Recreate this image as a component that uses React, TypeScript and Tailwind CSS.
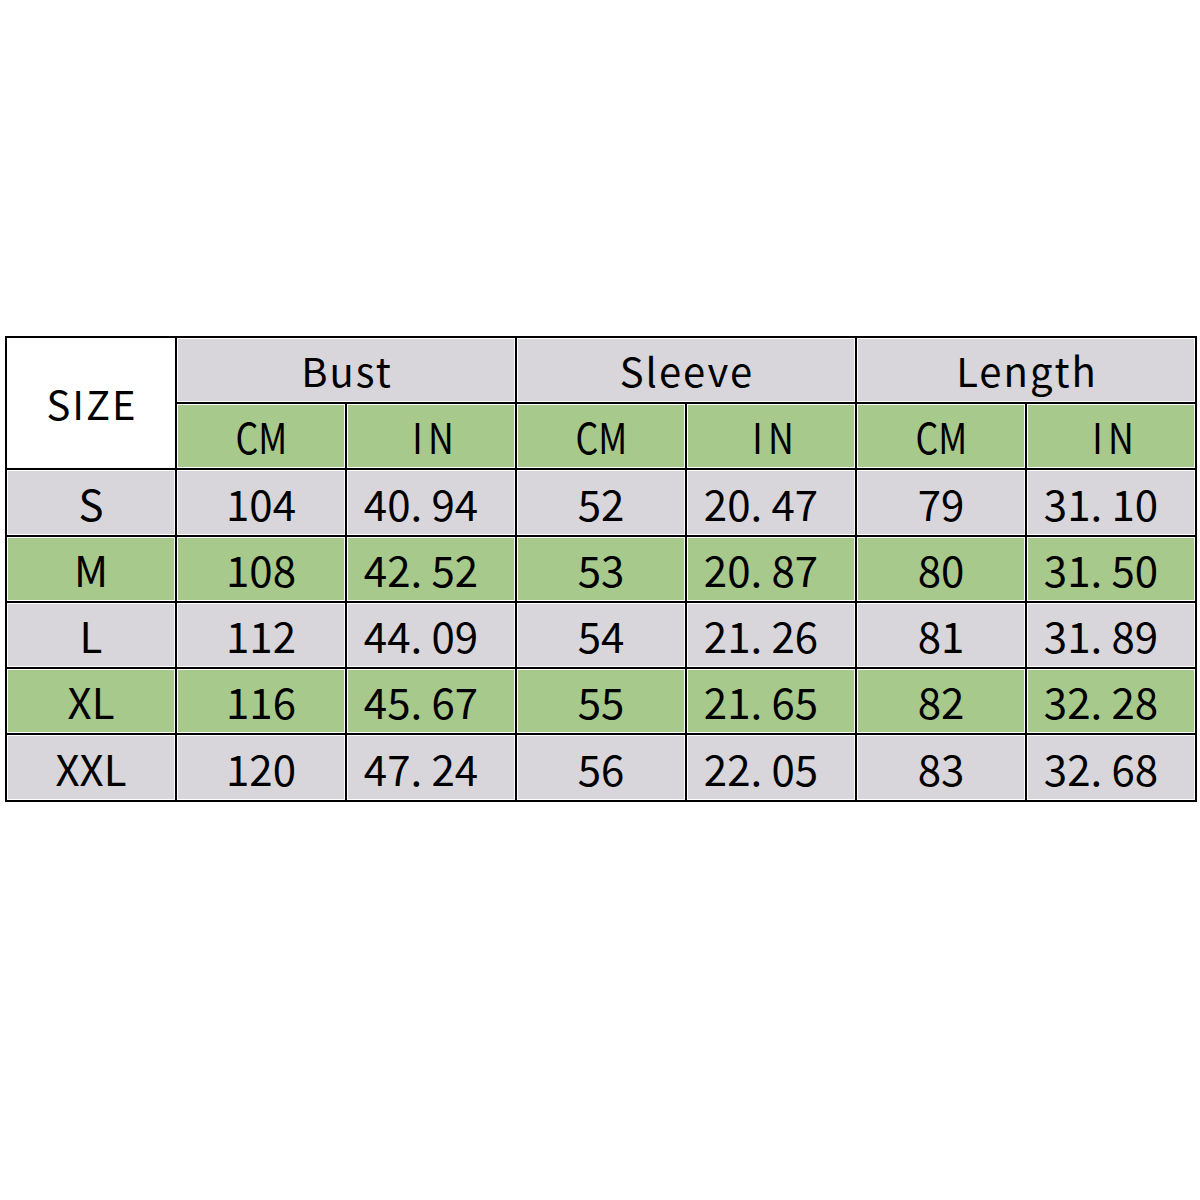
import React from "react";

const rows = [
  ["S", "104", "40. 94", "52", "20. 47", "79", "31. 10"],
  ["M", "108", "42. 52", "53", "20. 87", "80", "31. 50"],
  ["L", "112", "44. 09", "54", "21. 26", "81", "31. 89"],
  ["XL", "116", "45. 67", "55", "21. 65", "82", "32. 28"],
  ["XXL", "120", "47. 24", "56", "22. 05", "83", "32. 68"],
];

const font = { fontFamily: '"Noto Sans CJK SC", "Noto Sans", sans-serif' };

function Cell({ children, bg, className = "" }: { children: React.ReactNode; bg: string; className?: string }) {
  return (
    <div className={`bg-white p-px ${className}`}>
      <div className={`${bg} w-full h-full flex items-center justify-center text-black`}>{children}</div>
    </div>
  );
}

export default function App() {
  return (
    <div className="w-[1200px] h-[1200px] bg-white pt-[336px] pl-[5px]" style={font}>
      <div className="grid grid-cols-[168px_168px_168px_168px_168px_168px_168px] grid-rows-[64px_64px_65px_64px_64px_64px_65px] gap-[2px] bg-black p-[2px] w-[1192px]">
        <Cell bg="bg-white" className="row-span-2">
          <span className="text-[40px] tracking-[2px] leading-none pl-[2px]">SIZE</span>
        </Cell>
        {["Bust", "Sleeve", "Length"].map((h) => (
          <Cell key={h} bg="bg-[#d8d6da]" className="col-span-2">
            <span className="text-[40px] tracking-[2px] leading-none pl-[2px]">{h}</span>
          </Cell>
        ))}
        {["CM", "IN", "CM", "IN", "CM", "IN"].map((h, i) => (
          <Cell key={i} bg="bg-[#a8c98c]">
            <span className={`text-[42px] leading-none scale-x-[0.85] ${h === "IN" ? "tracking-[6px] pl-[10px]" : ""}`}>{h}</span>
          </Cell>
        ))}
        {rows.map((r, ri) =>
          r.map((v, ci) => (
            <Cell key={`${ri}-${ci}`} bg={ri % 2 === 1 ? "bg-[#a8c98c]" : "bg-[#d8d6da]"}>
              <span className={`text-[42px] leading-none ${v.includes(".") ? "pr-[20px]" : ""}`}>{v}</span>
            </Cell>
          ))
        )}
      </div>
    </div>
  );
}
